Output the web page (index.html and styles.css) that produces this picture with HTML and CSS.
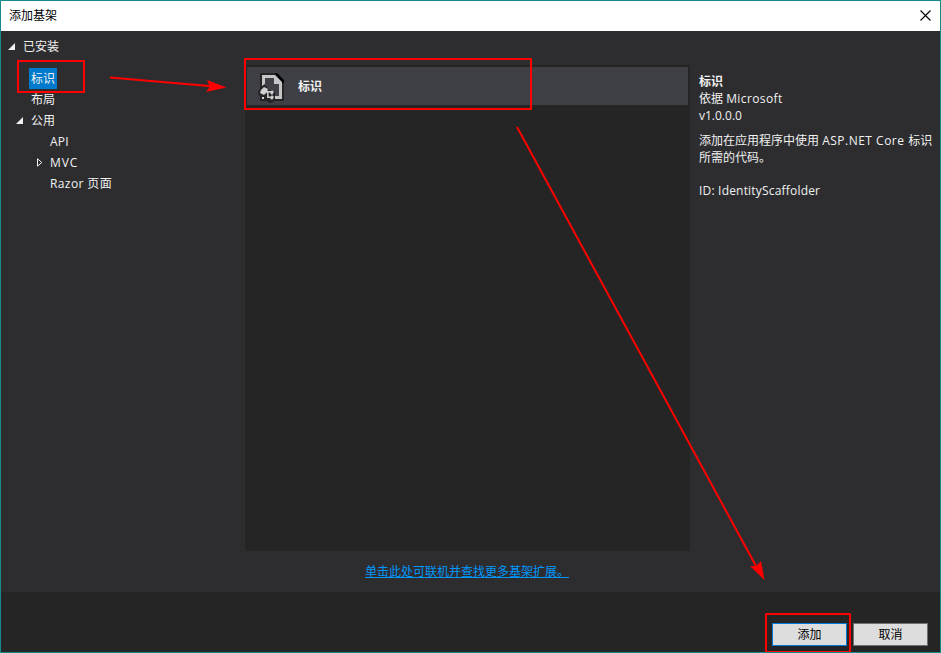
FILE: index.html
```html
<!DOCTYPE html>
<html lang="zh-CN">
<head>
<meta charset="utf-8">
<title>添加基架</title>
<link rel="stylesheet" href="styles.css">
</head>
<body>
<div class="dialog">
  <header class="titlebar">
    <span>添加基架</span>
    <svg class="close" width="11" height="11" viewBox="0 0 11 11"><path d="M.5 .5l10 10M10.5 .5l-10 10"/></svg>
  </header>
  <main class="content">
    <nav class="tree">
      <div class="node root"><svg class="arrow" width="7" height="7" viewBox="0 0 7 7"><path d="M7 0v7H0z"/></svg><span>已安装</span></div>
      <div class="node level1"><span class="selected">标识</span></div>
      <div class="node level1"><span>布局</span></div>
      <div class="node level1 parent"><svg class="arrow" width="7" height="7" viewBox="0 0 7 7"><path d="M7 0v7H0z"/></svg><span>公用</span></div>
      <div class="node level2"><span class="api">API</span></div>
      <div class="node level2 parent"><svg class="collapsed" width="6" height="9" viewBox="0 0 6 9"><path d="M.5 .8v7.400L4.800 4.500z"/></svg><span class="mvc">MVC</span></div>
      <div class="node level2"><span class="razor">Razor 页面</span></div>
    </nav>
    <section class="center">
      <div class="list">
        <div class="item">
          <svg class="scaffold" width="26" height="30" viewBox="0 0 26 30">
            <path fill="#252526" d="M2 0h16l8 8v20H16l-2 2h-3l-2-2H2v-4l-2-3v-3l2-2z"/>
            <path fill="#404046" d="M7 5h9v6h5v12h-4v-4l-3-2h-3l-3-4H7z"/>
            <path fill="#000" d="M17 0h2l7 7v3h-2z"/>
            <path fill="#c5c5c8" d="M4 2h13l7 7v17h-7v-3h4V11h-5V5H7v6l-3 2z"/>
            <path fill="#d0d0d2" d="M6 14l4 2-1 3-3 3-4-2 1-3zM4 24h2v2H4z"/>
            <path fill="none" stroke="#d0d0d2" stroke-width="1.500" d="M8 18.800h7M9.800 18.500v5.700h5"/>
            <path fill="#d0d0d2" d="M14 17l2 2-2 3-2-2zM14 22l2 2-2 3-2-2z"/>
          </svg>
          <strong>标识</strong>
        </div>
      </div>
      <div class="online"><a>单击此处可联机并查找更多基架扩展。</a></div>
    </section>
    <aside class="details">
      <strong>标识</strong>
      <div class="author">依据 <span>Microsoft</span></div>
      <div>v1.0.0.0</div>
      <p class="description">添加在应用程序中使用 <span class="aspnet">ASP.NET Core </span>标识<br>所需的代码。</p>
      <div class="identity">ID: IdentityScaffolder</div>
    </aside>
  </main>
  <footer class="footer">
    <button class="button primary">添加</button>
    <button class="button">取消</button>
  </footer>
  <svg class="annotations" width="941" height="653" viewBox="0 0 941 653">
    <g fill="none" stroke="#f00" stroke-width="2">
      <path d="M18 61H84V92H18zM245 59H531V109H245zM766 614H850V652H766z"/>
      <path d="M110 77.500L212 86.300M517 127L756 566"/>
    </g>
    <path fill="#f00" d="M226.500 87.500L206 92L210 86.500L207 80zM764.500 580L750 566L756.500 566L761 561z"/>
  </svg>
</div>
</body>
</html>
```
FILE: styles.css
```css
* { box-sizing: border-box; }
body {
  margin: 0;
  font: 12px/17px "Open Sans", "Noto Sans CJK SC", sans-serif;
  color: #f1f1f1;
}
.dialog {
  position: relative;
  display: flex;
  flex-direction: column;
  width: 941px;
  height: 653px;
  border: 1px solid #168b8b;
  background: #2d2d30;
  overflow: hidden;
  white-space: nowrap;
}
.titlebar {
  display: flex;
  justify-content: space-between;
  height: 30px;
  padding: 6px 9px 0 8px;
  background: #fff;
  color: #000;
}
.close { margin-top: 3px; fill: none; stroke: #000; stroke-width: 1.1; }
.content { display: flex; height: 561px; }
.tree { width: 244px; padding-top: 5px; }
.node { display: flex; align-items: center; height: 21px; }
.root { gap: 8px; padding-left: 7px; margin-bottom: 11px; }
.level1 { padding-left: 30px; }
.level1.parent { gap: 8px; padding-left: 15px; }
.level2 { padding-left: 49px; }
.level2.parent { gap: 7px; padding-left: 36px; }
.api { letter-spacing: .2px; }
.mvc { letter-spacing: .9px; }
.razor { letter-spacing: .4px; }
.arrow { fill: #f1f1f1; }
.collapsed { fill: none; stroke: #f1f1f1; }
.selected { height: 21px; margin-left: -2px; padding: 2px; background: #007acc; }
.center { width: 445px; padding-top: 34px; }
.list { height: 486px; padding: 2px; background: #252526; }
.item {
  display: flex;
  align-items: center;
  gap: 14px;
  height: 38px;
  padding-left: 11px;
  background: #3f3f46;
}
.scaffold { margin-top: 4px; }
.online { padding: 12px 0 0 120px; }
.online a { color: #0097fb; text-decoration: underline; text-underline-offset: 1px; }
.details { padding: 42px 0 0 9px; }
.author span { letter-spacing: .4px; }
.aspnet { letter-spacing: .5px; }
.identity { letter-spacing: .19px; }
.description { margin: 8px 0 16px; }
.footer {
  display: flex;
  gap: 6px;
  height: 60px;
  padding: 31px 0 0 771px;
  background: #252526;
}
.button {
  width: 75px;
  height: 23px;
  padding: 0;
  border: 1px solid #707070;
  background: #ddd;
  color: #000;
  font: inherit;
}
.primary { border-color: #0078d7; }
.annotations { position: absolute; top: -1px; left: -1px; pointer-events: none; }
```
